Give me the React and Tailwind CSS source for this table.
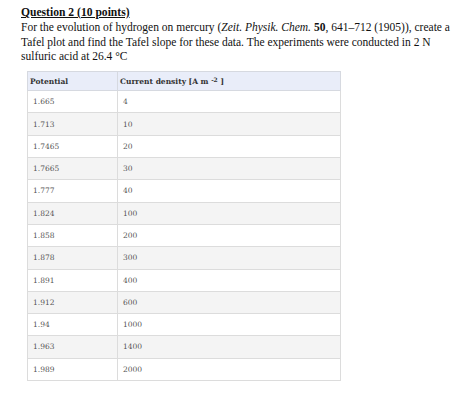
import React from 'react';

const rows = [
  ['1.665', '4'],
  ['1.713', '10'],
  ['1.7465', '20'],
  ['1.7665', '30'],
  ['1.777', '40'],
  ['1.824', '100'],
  ['1.858', '200'],
  ['1.878', '300'],
  ['1.891', '400'],
  ['1.912', '600'],
  ['1.94', '1000'],
  ['1.963', '1400'],
  ['1.989', '2000'],
];

export default function App() {
  return (
    <div className="w-[474px] h-[394px] bg-white overflow-hidden pt-[6px] pl-[21px]">
      {/* Question text */}
      <div className="font-['Liberation_Serif',serif] text-[11.5px] leading-[14.3px] text-[#111] whitespace-nowrap">
        <div className="font-bold underline text-[11.6px]">Question 2 (10 points)</div>
        <p>
          For the evolution of hydrogen on mercury (<i>Zeit. Physik. Chem.</i> <b>50</b>, 641–712 (1905)), create a
          <br />
          Tafel plot and find the Tafel slope for these data. The experiments were conducted in 2 N
          <br />
          sulfuric acid at 26.4 °C
        </p>
      </div>

      {/* Data table */}
      <table className="mt-[8px] ml-[6px] w-[314px] border-collapse font-['DejaVu_Serif','Liberation_Serif',serif] text-[7.5px]">
        <thead>
          <tr className="bg-[#e9edf9] h-[19px]">
            <th className="w-[90px] border border-[#d6d9e0] text-left font-bold text-[#333] pl-[2px]">Potential</th>
            <th className="border border-[#d6d9e0] text-left font-bold text-[#333] pl-[2px]">
              Current density [A m <sup className="relative -top-[2px] text-[6px]">-2</sup> ]
            </th>
          </tr>
        </thead>
        <tbody>
          {rows.map(([p, c], i) => (
            <tr key={p} className={i % 2 === 0 ? 'bg-white h-[22.3px]' : 'bg-[#f4f4f4] h-[22.3px]'}>
              <td className="border border-[#dcdcdc] text-[#555] pl-[5px]">{p}</td>
              <td className="border border-[#dcdcdc] text-[#555] pl-[5px]">{c}</td>
            </tr>
          ))}
        </tbody>
      </table>
    </div>
  );
}
